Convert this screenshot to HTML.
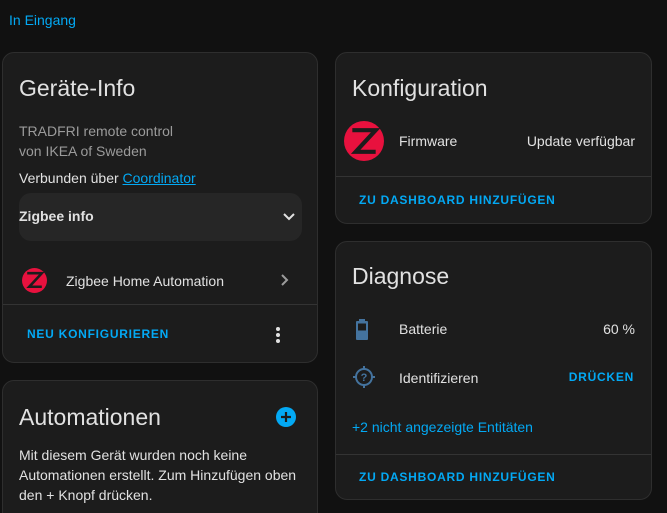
<!DOCTYPE html>
<html><head><meta charset="utf-8"><style>
*{box-sizing:border-box;margin:0;padding:0}
html,body{width:667px;height:513px;overflow:hidden}
body{background:#111;font-family:"Liberation Sans",sans-serif;color:#e1e1e1;position:relative}
.card{position:absolute;background:#1c1c1c;border:1px solid #2e2e2e;border-radius:12px;overflow:hidden}
.t{position:absolute;white-space:nowrap}
.h{font-size:23px;color:#e1e1e1}
.btn{font-size:12px;font-weight:bold;letter-spacing:0.75px;color:#03a9f4}
.sep{position:absolute;left:0;right:0;height:1px;background:#333}
.s{font-size:14px}
</style></head><body>
<div class="t" style="left:9px;top:12px;font-size:14px;color:#03a9f4">In Eingang</div>

<div class="card" style="left:2px;top:52px;width:316px;height:311px">
 <div class="t h" style="left:16px;top:22px">Geräte-Info</div>
 <div class="t s" style="left:16px;top:70px;color:#9b9b9b">TRADFRI remote control</div>
 <div class="t s" style="left:16px;top:90px;color:#9b9b9b">von IKEA of Sweden</div>
 <div class="t s" style="left:16px;top:117px">Verbunden über <span style="color:#03a9f4;text-decoration:underline">Coordinator</span></div>
 <div style="position:absolute;left:16px;top:140px;width:283px;height:48px;background:#262626;border-radius:12px"></div>
 <div class="t s" style="left:16px;top:155px;font-weight:bold">Zigbee info</div>
 <svg style="position:absolute;left:278px;top:156px" width="16" height="16" viewBox="0 0 16 16"><path d="M3 5l5 5 5-5" stroke="#e1e1e1" stroke-width="2" fill="none"/></svg>
 <svg style="position:absolute;left:19px;top:215px" width="25" height="25" viewBox="0 0 24 24"><circle cx="12" cy="12" r="12" fill="#e8113e"/><path d="M5 5h14l-12 13h12" stroke="#1c1c1c" stroke-width="2.5" fill="none"/></svg>
 <div class="t s" style="left:63px;top:220px">Zigbee Home Automation</div>
 <svg style="position:absolute;left:276px;top:219px" width="12" height="16" viewBox="0 0 12 16"><path d="M3 3l5 5-5 5" stroke="#9b9b9b" stroke-width="2" fill="none"/></svg>
 <div class="sep" style="top:251px"></div>
 <div class="t btn" style="left:24px;top:274px">NEU KONFIGURIEREN</div>
 <div style="position:absolute;left:273px;top:274px;width:4px;height:4px;border-radius:2px;background:#e1e1e1;box-shadow:0 6px #e1e1e1,0 12px #e1e1e1"></div>
</div>

<div class="card" style="left:2px;top:380px;width:316px;height:150px">
 <div class="t h" style="left:16px;top:23px">Automationen</div>
 <svg style="position:absolute;left:273px;top:26px" width="20" height="20" viewBox="0 0 20 20"><circle cx="10" cy="10" r="10" fill="#03a9f4"/><path d="M10 5v10M5 10h10" stroke="#1c1c1c" stroke-width="2.2"/></svg>
 <div class="t s" style="left:16px;top:64px;line-height:20px;white-space:normal;width:290px">Mit diesem Gerät wurden noch keine Automationen erstellt. Zum Hinzufügen oben den + Knopf drücken.</div>
</div>

<div class="card" style="left:335px;top:52px;width:317px;height:172px">
 <div class="t h" style="left:16px;top:22px">Konfiguration</div>
 <svg style="position:absolute;left:8px;top:68px" width="40" height="40" viewBox="0 0 24 24"><circle cx="12" cy="12" r="12" fill="#e8113e"/><path d="M5 5.5h14l-12 13h12" stroke="#1c1c1c" stroke-width="2.5" fill="none"/></svg>
 <div class="t s" style="left:63px;top:80px">Firmware</div>
 <div class="t s" style="right:16px;top:80px">Update verfügbar</div>
 <div class="sep" style="top:123px"></div>
 <div class="t btn" style="left:23px;top:140px">ZU DASHBOARD HINZUFÜGEN</div>
</div>

<div class="card" style="left:335px;top:241px;width:317px;height:259px">
 <div class="t h" style="left:16px;top:21px">Diagnose</div>
 <svg style="position:absolute;left:19px;top:77px" width="14" height="22" viewBox="0 0 14 22"><rect x="4" y="0" width="6" height="3" fill="#44739e"/><rect x="1" y="2" width="12" height="19" rx="1" fill="#44739e"/><rect x="3" y="4.5" width="8" height="7" fill="#1c1c1c"/></svg>
 <div class="t s" style="left:63px;top:79px">Batterie</div>
 <div class="t s" style="right:16px;top:79px">60 %</div>
 <svg style="position:absolute;left:16px;top:123px" width="24" height="24" viewBox="0 0 24 24"><circle cx="12" cy="12" r="8" stroke="#44739e" stroke-width="2" fill="none"/><path d="M12 1v4M12 19v4M1 12h4M19 12h4" stroke="#44739e" stroke-width="2"/><text x="12" y="16" font-size="11" text-anchor="middle" fill="#44739e" font-family="Liberation Sans" font-weight="bold">?</text></svg>
 <div class="t s" style="left:63px;top:128px">Identifizieren</div>
 <div class="t btn" style="right:17px;top:128px">DRÜCKEN</div>
 <div class="t s" style="left:16px;top:177px;color:#03a9f4">+2 nicht angezeigte Entitäten</div>
 <div class="sep" style="top:212px"></div>
 <div class="t btn" style="left:23px;top:228px">ZU DASHBOARD HINZUFÜGEN</div>
</div>
</body></html>
